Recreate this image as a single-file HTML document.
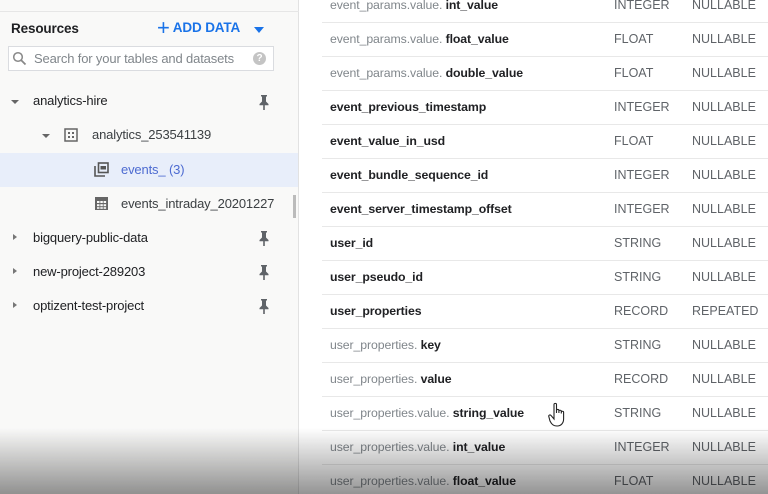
<!DOCTYPE html>
<html><head><meta charset="utf-8"><style>
*{margin:0;padding:0;box-sizing:border-box}
body{width:768px;height:494px;overflow:hidden;background:#fff;font-family:"Liberation Sans",Arial,sans-serif;position:relative;color:#202124}
#left{position:absolute;left:0;top:0;width:299px;height:494px;background:#f9f9f8;border-right:1px solid #e2e2e2}
.topline{position:absolute;left:0;top:11px;width:299px;height:1px;background:#e6e6e6}
.t{position:absolute;font-size:13px;white-space:nowrap;line-height:16px;letter-spacing:-0.15px}
.row{position:absolute;left:322px;width:446px;height:1px;background:#e8e8e8}
.c1{position:absolute;left:330px;font-size:12.3px;white-space:nowrap;line-height:16px;color:#202124;letter-spacing:-0.1px}
.c1 span{color:#80868b}
.c1 b{font-weight:bold;color:#202124}
.c2{position:absolute;left:614px;font-size:12.5px;color:#5f6368;line-height:16px}
.c3{position:absolute;left:692px;font-size:12.5px;color:#5f6368;line-height:16px}
.tri{position:absolute;width:0;height:0}
#shade{position:absolute;left:0;top:428px;width:768px;height:66px;background:linear-gradient(rgba(0,0,0,0),rgba(0,0,0,0.42));pointer-events:none}
</style></head><body>
<div id="left">
<div class="topline"></div>
<div class="t" style="left:11px;top:21px;font-weight:bold;font-size:13.5px">Resources</div>
<div class="t" style="left:157px;top:20px;color:#1a73e8;font-weight:bold;font-size:13.5px"><span style="font-size:22px;vertical-align:-3px;font-weight:normal">+</span> ADD DATA</div>
<div class="tri" style="left:254px;top:27px;border-left:5px solid transparent;border-right:5px solid transparent;border-top:6px solid #1a73e8"></div>
<div style="position:absolute;left:8px;top:46px;width:266px;height:25px;background:#fff;border:1px solid #dadce0"></div>
<svg style="position:absolute;left:12px;top:51px" width="15" height="15" viewBox="0 0 15 15"><circle cx="6" cy="6" r="4.3" fill="none" stroke="#888" stroke-width="1.5"/><path d="M9 9l4.5 4.5" stroke="#888" stroke-width="1.8"/></svg>
<div class="t" style="left:34px;top:51px;color:#80868b">Search for your tables and datasets</div>
<div style="position:absolute;left:253px;top:52px;width:13px;height:13px;border-radius:50%;background:#c4c4c4;color:#fff;font-size:10px;font-weight:bold;text-align:center;line-height:13px">?</div>

<div class="tri" style="left:11px;top:100px;border-left:4px solid transparent;border-right:4px solid transparent;border-top:4px solid #666"></div>
<div class="t" style="left:33px;top:93px">analytics-hire</div>
<div class="tri" style="left:42px;top:134px;border-left:4px solid transparent;border-right:4px solid transparent;border-top:4px solid #666"></div>
<svg style="position:absolute;left:64px;top:128px" width="14" height="14" viewBox="0 0 14 14"><rect x="1" y="1" width="12" height="12" fill="none" stroke="#666" stroke-width="1.5"/><rect x="4" y="4" width="2" height="2" fill="#666"/><rect x="8" y="4" width="2" height="2" fill="#666"/><rect x="4" y="8" width="2" height="2" fill="#666"/><rect x="8" y="8" width="2" height="2" fill="#666"/></svg>
<div class="t" style="left:92px;top:127px;color:#3c4043">analytics_253541139</div>
<div style="position:absolute;left:0;top:153px;width:298px;height:34px;background:#e8eefa"></div>
<svg style="position:absolute;left:94px;top:162px" width="15" height="15" viewBox="0 0 15 15"><path d="M1 4v10h10" fill="none" stroke="#555" stroke-width="1.6"/><rect x="4.5" y="1" width="9.5" height="9.5" fill="none" stroke="#555" stroke-width="1.6"/><rect x="6.5" y="4" width="5.5" height="3.5" fill="#555"/></svg>
<div class="t" style="left:121px;top:162px;color:#4d6bd1">events_ (3)</div>
<svg style="position:absolute;left:94px;top:196px" width="15" height="15" viewBox="0 0 15 15"><rect x="1" y="1" width="13" height="13" fill="#666"/><rect x="3" y="5" width="2.5" height="2" fill="#f9f9f8"/><rect x="6.3" y="5" width="2.5" height="2" fill="#f9f9f8"/><rect x="9.6" y="5" width="2.5" height="2" fill="#f9f9f8"/><rect x="3" y="8.2" width="2.5" height="2" fill="#f9f9f8"/><rect x="6.3" y="8.2" width="2.5" height="2" fill="#f9f9f8"/><rect x="9.6" y="8.2" width="2.5" height="2" fill="#f9f9f8"/><rect x="3" y="11.2" width="2.5" height="1.6" fill="#f9f9f8"/><rect x="6.3" y="11.2" width="2.5" height="1.6" fill="#f9f9f8"/><rect x="9.6" y="11.2" width="2.5" height="1.6" fill="#f9f9f8"/></svg>
<div class="t" style="left:121px;top:196px;color:#3c4043">events_intraday_20201227</div>
<div style="position:absolute;left:293px;top:195px;width:3px;height:23px;background:#bbb"></div>

<div class="tri" style="left:13px;top:234px;border-top:3.5px solid transparent;border-bottom:3.5px solid transparent;border-left:4px solid #777"></div>
<div class="t" style="left:33px;top:230px">bigquery-public-data</div>
<div class="tri" style="left:13px;top:268px;border-top:3.5px solid transparent;border-bottom:3.5px solid transparent;border-left:4px solid #777"></div>
<div class="t" style="left:33px;top:264px">new-project-289203</div>
<div class="tri" style="left:13px;top:302px;border-top:3.5px solid transparent;border-bottom:3.5px solid transparent;border-left:4px solid #777"></div>
<div class="t" style="left:33px;top:298px">optizent-test-project</div>
</div>
<svg width="0" height="0" style="position:absolute"><defs><symbol id="pin" viewBox="0 0 12 16"><path d="M3 1h6v1.5H8v5l2.5 2.5v1.2H6.8V16H5.2v-4.8H1.5V10L4 7.5v-5H3z" fill="#5f6368"/></symbol></defs></svg>
<svg style="position:absolute;left:258px;top:94px" width="12" height="16"><use href="#pin"/></svg>
<svg style="position:absolute;left:258px;top:230px" width="12" height="16"><use href="#pin"/></svg>
<svg style="position:absolute;left:258px;top:264px" width="12" height="16"><use href="#pin"/></svg>
<svg style="position:absolute;left:258px;top:298px" width="12" height="16"><use href="#pin"/></svg>

<div class="row" style="top:22px"></div><div class="row" style="top:56px"></div><div class="row" style="top:90px"></div><div class="row" style="top:124px"></div><div class="row" style="top:158px"></div><div class="row" style="top:192px"></div><div class="row" style="top:226px"></div><div class="row" style="top:260px"></div><div class="row" style="top:294px"></div><div class="row" style="top:328px"></div><div class="row" style="top:362px"></div><div class="row" style="top:396px"></div><div class="row" style="top:430px"></div><div class="row" style="top:464px"></div>

<div class="c1" style="top:-3px"><span>event_params.value. </span><b>int_value</b></div><div class="c2" style="top:-3px">INTEGER</div><div class="c3" style="top:-3px">NULLABLE</div>
<div class="c1" style="top:31px"><span>event_params.value. </span><b>float_value</b></div><div class="c2" style="top:31px">FLOAT</div><div class="c3" style="top:31px">NULLABLE</div>
<div class="c1" style="top:65px"><span>event_params.value. </span><b>double_value</b></div><div class="c2" style="top:65px">FLOAT</div><div class="c3" style="top:65px">NULLABLE</div>
<div class="c1" style="top:99px"><b>event_previous_timestamp</b></div><div class="c2" style="top:99px">INTEGER</div><div class="c3" style="top:99px">NULLABLE</div>
<div class="c1" style="top:133px"><b>event_value_in_usd</b></div><div class="c2" style="top:133px">FLOAT</div><div class="c3" style="top:133px">NULLABLE</div>
<div class="c1" style="top:167px"><b>event_bundle_sequence_id</b></div><div class="c2" style="top:167px">INTEGER</div><div class="c3" style="top:167px">NULLABLE</div>
<div class="c1" style="top:201px"><b>event_server_timestamp_offset</b></div><div class="c2" style="top:201px">INTEGER</div><div class="c3" style="top:201px">NULLABLE</div>
<div class="c1" style="top:235px"><b>user_id</b></div><div class="c2" style="top:235px">STRING</div><div class="c3" style="top:235px">NULLABLE</div>
<div class="c1" style="top:269px"><b>user_pseudo_id</b></div><div class="c2" style="top:269px">STRING</div><div class="c3" style="top:269px">NULLABLE</div>
<div class="c1" style="top:303px"><b>user_properties</b></div><div class="c2" style="top:303px">RECORD</div><div class="c3" style="top:303px">REPEATED</div>
<div class="c1" style="top:337px"><span>user_properties. </span><b>key</b></div><div class="c2" style="top:337px">STRING</div><div class="c3" style="top:337px">NULLABLE</div>
<div class="c1" style="top:371px"><span>user_properties. </span><b>value</b></div><div class="c2" style="top:371px">RECORD</div><div class="c3" style="top:371px">NULLABLE</div>
<div class="c1" style="top:405px"><span>user_properties.value. </span><b>string_value</b></div><div class="c2" style="top:405px">STRING</div><div class="c3" style="top:405px">NULLABLE</div>
<div class="c1" style="top:439px"><span>user_properties.value. </span><b>int_value</b></div><div class="c2" style="top:439px">INTEGER</div><div class="c3" style="top:439px">NULLABLE</div>
<div class="c1" style="top:473px"><span>user_properties.value. </span><b>float_value</b></div><div class="c2" style="top:473px">FLOAT</div><div class="c3" style="top:473px">NULLABLE</div>

<svg style="position:absolute;left:548px;top:402px" width="20" height="26" viewBox="0 0 20 26"><path d="M6 2.5c0-1.5 2.5-1.5 2.5 0V11V8.5c0-1.4 2.4-1.4 2.4 0V11V9.3c0-1.4 2.4-1.4 2.4 0V11.5V10.3c0-1.4 2.3-1.4 2.3 0V17c0 4-2.5 7-6.5 7S3.5 22 2 19L0.8 14.5c-0.4-1.4 1.5-2.2 2.3-0.9L6 17z" fill="#fff" stroke="#222" stroke-width="1.1"/></svg>
<div id="shade"></div>
</body></html>
